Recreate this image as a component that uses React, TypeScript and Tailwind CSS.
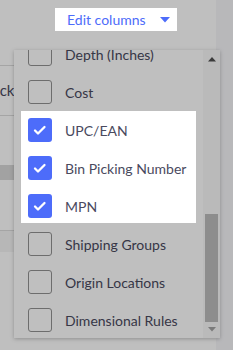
type Col = { label: string; checked: boolean };

const before: Col[] = [
  { label: "Depth (Inches)", checked: false },
  { label: "Cost", checked: false },
];

const highlighted: Col[] = [
  { label: "UPC/EAN", checked: true },
  { label: "Bin Picking Number", checked: true },
  { label: "MPN", checked: true },
];

const after: Col[] = [
  { label: "Shipping Groups", checked: false },
  { label: "Origin Locations", checked: false },
  { label: "Dimensional Rules", checked: false },
];

function Checkbox({ checked }: { checked: boolean }) {
  if (checked) {
    return (
      <span className="flex h-6 w-6 shrink-0 items-center justify-center rounded-[3px] bg-[#4d6cfa]">
        <svg width="24" height="24" viewBox="0 0 24 24" fill="none">
          <path
            d="M7 12.5l3 3 6.5-6.5"
            stroke="#fff"
            strokeWidth="2.3"
            strokeLinecap="round"
            strokeLinejoin="round"
          />
        </svg>
      </span>
    );
  }
  return <span className="h-6 w-6 shrink-0 rounded-[3px] border border-[#929292] bg-white" />;
}

function Row({ col, inset }: { col: Col; inset?: boolean }) {
  return (
    <div className={`flex h-[38px] items-center gap-[13px] ${inset ? "pl-[7px]" : "pl-[14px]"}`}>
      <Checkbox checked={col.checked} />
      <span className="whitespace-nowrap text-[14px] text-[#4a4a5e]">{col.label}</span>
    </div>
  );
}

export default function App() {
  return (
    <div className="relative h-[350px] w-[233px] overflow-hidden bg-white font-['Lato','Noto_Sans',sans-serif]">
      {/* page behind the overlay */}
      <div className="flex h-full">
        <div className="flex flex-1 flex-col">
          <div className="flex h-[39px] justify-end pr-[39px] pt-[8px]">
            <button className="relative z-20 flex h-[23px] w-[122px] items-center bg-white pl-[12px]">
              <span className="text-[14px] leading-none text-[#4d6cfa]">Edit columns</span>
              <svg className="ml-[14px]" width="10" height="6" viewBox="0 0 10 6">
                <path d="M0 0h10L5 5.5z" fill="#4d6cfa" />
              </svg>
            </button>
          </div>
          <div className="h-[27px] border-b border-[#dcdcdc]" />
          <div className="flex h-[50px] items-center border-b border-[#dcdcdc]">
            <span className="-ml-[22px] text-[15px] text-[#4a4a5e]">Stock</span>
          </div>
          <div className="h-[49px]" />
          <div className="h-[15px] bg-[#d8d8d8]" />
          <div className="h-[50px]" />
          <div className="h-[22px] border-t border-[#dcdcdc] bg-[#f5f5f5]" />
        </div>
        <div className="w-[17px] bg-[#f6f6f9]" />
      </div>

      {/* tour overlay */}
      <div className="absolute inset-0 z-10 bg-black/25" />

      {/* columns menu */}
      <div className="absolute left-[14px] top-[50px] flex h-[288px] w-[206px] overflow-hidden bg-white shadow-[0_1px_4px_rgba(0,0,0,0.25)]">
        <div className="flex-1">
          <div className="-mt-[15px]">
            {before.map((c) => (
              <Row key={c.label} col={c} />
            ))}
            <div className="relative z-20 mx-[7px] mb-[2px] h-[112px] bg-white">
              {highlighted.map((c) => (
                <Row key={c.label} col={c} inset />
              ))}
            </div>
            {after.map((c) => (
              <Row key={c.label} col={c} />
            ))}
          </div>
        </div>
        <div className="flex w-[17px] flex-col items-center bg-[#f8f8f8] pb-[6px] pt-[7px]">
          <svg width="8" height="5" viewBox="0 0 8 5">
            <path d="M4 0l4 4.5H0z" fill="#4f4f4f" />
          </svg>
          <div className="mt-[152px] h-[108px] w-[13px] bg-[#bdbdbd]" />
          <svg className="mt-auto" width="8" height="5" viewBox="0 0 8 5">
            <path d="M0 0h8L4 4.5z" fill="#a3a3a3" />
          </svg>
        </div>
      </div>
    </div>
  );
}
